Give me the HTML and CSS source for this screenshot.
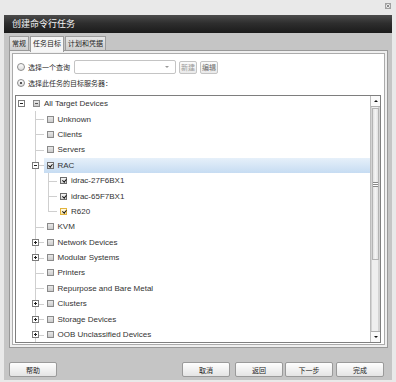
FILE: index.html
```html
<!DOCTYPE html>
<html lang="zh">
<head>
    <meta charset="UTF-8">
    <meta name="viewport" content="width=device-width, initial-scale=1.0">
    <title>创建命令行任务</title>
    <link rel="stylesheet" href="styles.css">
</head>
<body>
    <div class="topbar">
        <svg class="close" width="6" height="6" viewBox="0 0 6 6">
            <rect x="0.5" y="0.5" width="5" height="5" fill="none" stroke="#a0a0a0"/>
            <path d="M1.5 1.5 L4.5 4.5 M4.5 1.5 L1.5 4.5" stroke="#8a8a8a" stroke-width="1"/>
        </svg>
    </div>
    <div class="dialog">
        <div class="title">创建命令行任务</div>
        <div class="body">
            <div class="tabs">
                <div class="tab">常规</div>
                <div class="tab active">任务目标</div>
                <div class="tab">计划和凭据</div>
            </div>
            <div class="panel">
                <div class="panel-inner">
                    <div class="opt">
                        <span class="radio"></span>
                        <span class="opt-label">选择一个查询</span>
                        <div class="select"><span class="caret"></span></div>
                        <button class="mini">新建</button>
                        <button class="mini dark">编辑</button>
                    </div>
                    <div class="opt">
                        <span class="radio on"></span>
                        <span class="opt-label">选择此任务的目标服务器：</span>
                    </div>
                    <div class="treebox">
                        <div class="tree">
                            <div class="row">
                                <span class="slot root"><span class="exp"></span></span>
                                <span class="item"><span class="cb part"></span>All Target Devices</span>
                            </div>
                            <div class="row">
                                <span class="indent"></span>
                                <span class="slot"></span>
                                <span class="item"><span class="cb"></span>Unknown</span>
                            </div>
                            <div class="row">
                                <span class="indent"></span>
                                <span class="slot"></span>
                                <span class="item"><span class="cb"></span>Clients</span>
                            </div>
                            <div class="row">
                                <span class="indent"></span>
                                <span class="slot"></span>
                                <span class="item"><span class="cb"></span>Servers</span>
                            </div>
                            <div class="row">
                                <span class="indent"></span>
                                <span class="slot"><span class="exp"></span></span>
                                <span class="item sel"><span class="cb on"></span>RAC</span>
                            </div>
                            <div class="row">
                                <span class="indent"></span>
                                <span class="indent line"></span>
                                <span class="slot"></span>
                                <span class="item"><span class="cb on"></span>idrac-27F6BX1</span>
                            </div>
                            <div class="row">
                                <span class="indent"></span>
                                <span class="indent line"></span>
                                <span class="slot"></span>
                                <span class="item"><span class="cb on"></span>idrac-65F7BX1</span>
                            </div>
                            <div class="row">
                                <span class="indent"></span>
                                <span class="indent line"></span>
                                <span class="slot last"></span>
                                <span class="item"><span class="cb on hover"></span>R620</span>
                            </div>
                            <div class="row">
                                <span class="indent"></span>
                                <span class="slot"></span>
                                <span class="item"><span class="cb"></span>KVM</span>
                            </div>
                            <div class="row">
                                <span class="indent"></span>
                                <span class="slot"><span class="exp plus"></span></span>
                                <span class="item"><span class="cb"></span>Network Devices</span>
                            </div>
                            <div class="row">
                                <span class="indent"></span>
                                <span class="slot"><span class="exp plus"></span></span>
                                <span class="item"><span class="cb"></span>Modular Systems</span>
                            </div>
                            <div class="row">
                                <span class="indent"></span>
                                <span class="slot"></span>
                                <span class="item"><span class="cb"></span>Printers</span>
                            </div>
                            <div class="row">
                                <span class="indent"></span>
                                <span class="slot"></span>
                                <span class="item"><span class="cb"></span>Repurpose and Bare Metal</span>
                            </div>
                            <div class="row">
                                <span class="indent"></span>
                                <span class="slot"><span class="exp plus"></span></span>
                                <span class="item"><span class="cb"></span>Clusters</span>
                            </div>
                            <div class="row">
                                <span class="indent"></span>
                                <span class="slot"><span class="exp plus"></span></span>
                                <span class="item"><span class="cb"></span>Storage Devices</span>
                            </div>
                            <div class="row">
                                <span class="indent"></span>
                                <span class="slot"><span class="exp plus"></span></span>
                                <span class="item"><span class="cb"></span>OOB Unclassified Devices</span>
                            </div>
                        </div>
                        <div class="vscroll">
                            <div class="arrow up"></div>
                            <div class="track"><div class="thumb"></div></div>
                            <div class="arrow down"></div>
                        </div>
                    </div>
                </div>
            </div>
            <div class="actions">
                <button class="btn">帮助</button>
                <button class="btn push">取消</button>
                <button class="btn gap5">返回</button>
                <button class="btn gap2">下一步</button>
                <button class="btn gap3">完成</button>
            </div>
        </div>
    </div>
</body>
</html>
```

FILE: styles.css
```css
body {
    margin: 0;
    width: 396px;
    height: 382px;
    overflow: hidden;
    background: #e9e9e9;
    font-family: "Liberation Sans", "Noto Sans CJK SC", sans-serif;
    font-size: 8px;
    color: #2a2a2a;
}
.topbar {
    height: 15px;
    display: flex;
    justify-content: flex-end;
    padding-right: 5px;
}
.close {
    margin-top: 3px;
}
.dialog {
    margin: 0 4px;
    height: 365px;
    display: flex;
    flex-direction: column;
    background: #c5c5c5;
}
.title {
    height: 18px;
    line-height: 18px;
    padding-left: 8px;
    background: linear-gradient(#4c4c4c, #2e2e2e 45%, #1b1b1b);
    color: #f4f4f4;
    font-family: "Noto Sans CJK SC", sans-serif;
    font-size: 9px;
}
.body {
    flex: 1;
    display: flex;
    flex-direction: column;
    padding: 3px 4px 3px 5px;
}
.tabs {
    display: flex;
    gap: 1px;
    height: 14px;
    font-family: "Noto Sans CJK SC", sans-serif;
    font-size: 7px;
}
.tab {
    padding: 0 2px;
    line-height: 13px;
    border: 1px solid #9c9c9c;
    border-bottom: none;
    background: linear-gradient(#e6e6e6, #cdcdcd);
    color: #222;
}
.tab.active {
    position: relative;
    z-index: 1;
    height: 15px;
    background: #f6f6f6;
}
.panel {
    height: 298px;
    box-sizing: border-box;
    border: 1px solid #999;
    padding: 2px;
    background: #efefef;
}
.panel-inner {
    height: 100%;
    box-sizing: border-box;
    display: flex;
    flex-direction: column;
    padding: 6px 3px 1px 2px;
    border: 1px solid #ababab;
    background: #fff;
}
.opt {
    display: flex;
    align-items: center;
    height: 14px;
    padding-left: 2px;
    font-family: "Noto Sans CJK SC", sans-serif;
    font-size: 7px;
}
.opt + .opt {
    margin-top: 2px;
}
.radio {
    width: 8px;
    height: 8px;
    box-sizing: border-box;
    border: 1px solid #8c8c8c;
    border-radius: 50%;
    background: linear-gradient(#fdfdfd, #dcdcdc);
    margin-right: 3px;
    display: flex;
    align-items: center;
    justify-content: center;
}
.radio.on::after {
    content: "";
    width: 2px;
    height: 2px;
    border-radius: 50%;
    background: #222;
}
.select {
    width: 102px;
    height: 14px;
    box-sizing: border-box;
    margin-left: 4px;
    border: 1px solid #c4c4c4;
    border-radius: 2px;
    background: #fff;
    display: flex;
    align-items: center;
    justify-content: flex-end;
    padding-right: 6px;
}
.caret {
    border-left: 2px solid transparent;
    border-right: 2px solid transparent;
    border-top: 2px solid #999;
}
.mini {
    height: 13px;
    margin-left: 3px;
    padding: 0 1px;
    border: 1px solid #c4c4c4;
    border-radius: 2px;
    background: linear-gradient(#fafafa, #eaeaea);
    font-family: "Noto Sans CJK SC", sans-serif;
    font-size: 7px;
    line-height: 11px;
    color: #9a9a9a;
}
.mini.dark {
    color: #6a6a6a;
}
.treebox {
    flex: 1;
    min-height: 0;
    margin-top: 5px;
    display: flex;
    border: 1px solid #7e7e7e;
    background: #fff;
    overflow: hidden;
}
.tree {
    flex: 1;
    overflow: hidden;
}
.row {
    height: 15.4px;
    display: flex;
    padding-left: 2px;
}
.indent {
    width: 13.5px;
    flex: none;
    position: relative;
}
.indent.line::before {
    content: "";
    position: absolute;
    left: 3px;
    top: 0;
    bottom: 0;
    width: 1px;
    background: #cfcfcf;
}
.slot {
    width: 12px;
    flex: none;
    position: relative;
    display: flex;
    align-items: center;
}
.slot::before {
    content: "";
    position: absolute;
    left: 3px;
    top: 0;
    bottom: 0;
    width: 1px;
    background: #cfcfcf;
}
.slot.last::before {
    bottom: 50%;
}
.slot::after {
    content: "";
    position: absolute;
    left: 3px;
    right: 0;
    top: 50%;
    height: 1px;
    background: #cfcfcf;
}
.slot.root::before,
.slot.root::after {
    display: none;
}
.exp {
    position: relative;
    z-index: 1;
    width: 7px;
    height: 7px;
    box-sizing: border-box;
    border: 1px solid #7a7a7a;
    background: #fff;
}
.exp::before {
    content: "";
    position: absolute;
    left: 1px;
    top: 2px;
    width: 3px;
    height: 1px;
    background: #222;
}
.exp.plus::after {
    content: "";
    position: absolute;
    left: 2px;
    top: 1px;
    width: 1px;
    height: 3px;
    background: #222;
}
.item {
    flex: 1;
    display: flex;
    align-items: center;
    gap: 4px;
    padding-left: 3px;
    white-space: nowrap;
    color: #333;
}
.item.sel {
    background: linear-gradient(#e6f0fa, #c6dcf2);
}
.cb {
    width: 7px;
    height: 7px;
    flex: none;
    box-sizing: border-box;
    border: 1px solid #8a8a8a;
    background: linear-gradient(#e8e8e8, #cbcbcb);
    position: relative;
}
.cb.part::after {
    content: "";
    position: absolute;
    left: 1px;
    top: 2px;
    width: 3px;
    height: 1px;
    background: #555;
}
.cb.on {
    border-color: #6c6c6c;
    background: linear-gradient(#f4f4f4, #d6d6d6);
}
.cb.on::after {
    content: "";
    position: absolute;
    left: 1.5px;
    top: 0;
    width: 1.5px;
    height: 3px;
    border-right: 1.2px solid #111;
    border-bottom: 1.2px solid #111;
    transform: rotate(40deg);
}
.cb.hover {
    border-color: #e2b33c;
    background: linear-gradient(#fffbe8, #f6e3a6);
}
.vscroll {
    width: 9px;
    flex: none;
    display: flex;
    flex-direction: column;
    border-left: 1px solid #bcbcbc;
    background: #ececec;
}
.arrow {
    height: 10px;
    flex: none;
    display: flex;
    align-items: center;
    justify-content: center;
    background: #fafafa;
}
.arrow.up {
    border-bottom: 1px solid #b0b0b0;
}
.arrow.down {
    border-top: 1px solid #b0b0b0;
}
.arrow.up::after {
    content: "";
    border-left: 2px solid transparent;
    border-right: 2px solid transparent;
    border-bottom: 2px solid #111;
}
.arrow.down::after {
    content: "";
    border-left: 2px solid transparent;
    border-right: 2px solid transparent;
    border-top: 2px solid #111;
}
.track {
    flex: 1;
    display: flex;
    flex-direction: column;
    background: linear-gradient(to right, #d4d4d4 0 1px, #efefef 1px 7px, #d4d4d4 7px);
}
.thumb {
    height: 150px;
    margin: 1px 1px 0;
    border: 1px solid #b4b4b4;
    background: linear-gradient(to right, #e2e2e2, #f4f4f4 50%, #e2e2e2) ;
    display: flex;
    align-items: center;
    justify-content: center;
}
.thumb::after {
    content: "";
    width: 5px;
    height: 3px;
    border-top: 1px solid #888;
    border-bottom: 1px solid #888;
    background: linear-gradient(#fff 0 1px, #888 1px 2px, #fff 2px);
}
.actions {
    display: flex;
    margin-top: 14px;
    padding-right: 4px;
}
.btn {
    width: 48px;
    height: 15px;
    padding: 0;
    border: 1px solid #9a9a9a;
    border-radius: 2px;
    background: linear-gradient(#fefefe, #e4e4e4);
    font-family: "Noto Sans CJK SC", sans-serif;
    font-size: 7px;
    color: #222;
}
.btn.push {
    margin-left: auto;
}
.btn.gap5 {
    margin-left: 5px;
}
.btn.gap2 {
    margin-left: 2px;
}
.btn.gap3 {
    margin-left: 3px;
}
```
